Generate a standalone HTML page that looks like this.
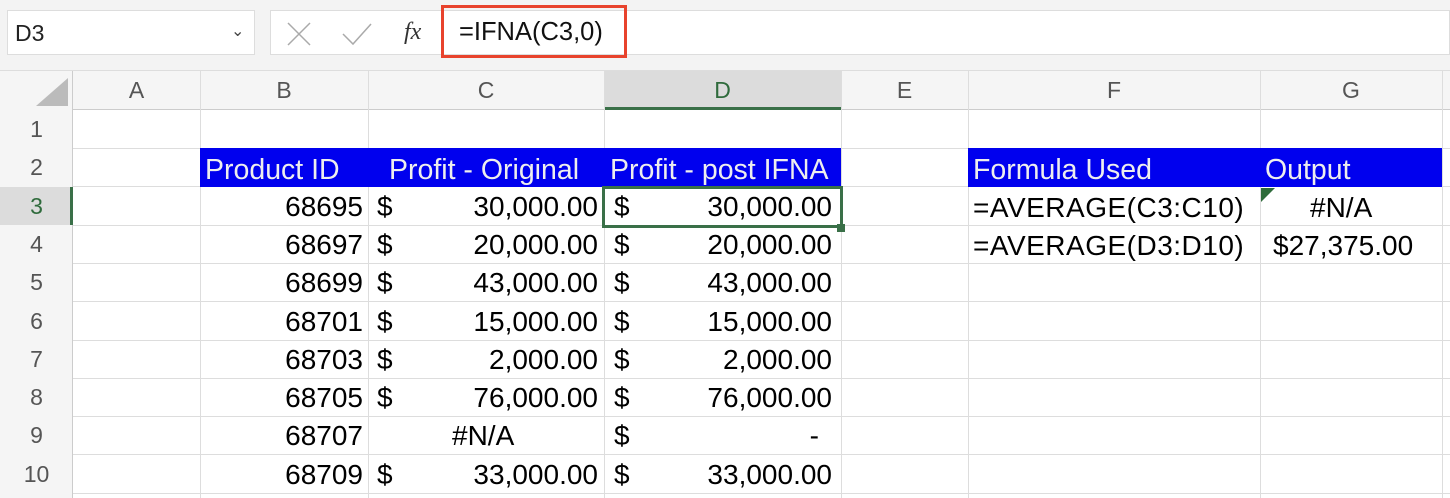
<!DOCTYPE html><html><head><style>
body{margin:0;width:1450px;height:498px;overflow:hidden;background:#fff;font-family:"Liberation Sans",Arial,sans-serif;position:relative}
.a{position:absolute;box-sizing:border-box}
.t{position:absolute;font-size:28px;line-height:38px;white-space:nowrap;color:#000}
.h{position:absolute;font-size:23px;color:#555;text-align:center;line-height:38px}
</style></head><body>
<div class="a" style="left:0;top:0;width:1450px;height:71px;background:#f3f3f3;border-bottom:1px solid #ddd"></div>
<div class="a" style="left:7px;top:10px;width:248px;height:45px;background:#fff;border:1px solid #ddd"></div>
<div class="t" style="left:15px;top:14px;font-size:23px;color:#222">D3</div>
<div class="t" style="left:231px;top:13px;font-size:16px;color:#444">⌄</div>
<div class="a" style="left:270px;top:10px;width:1180px;height:45px;background:#fff;border:1px solid #ddd"></div>
<svg class="a" style="left:285px;top:20px" width="110" height="26"><path d="M3 3L25 25M25 3L3 25" stroke="#aaa" stroke-width="1.5" fill="none"/><path d="M58 14L68 24L86 4" stroke="#aaa" stroke-width="1.5" fill="none"/></svg>
<div class="t" style="left:404px;top:13px;font-family:'Liberation Serif',serif;font-style:italic;font-size:24px;color:#333">fx</div>
<div class="a" style="left:441px;top:5px;width:186px;height:53px;border:3px solid #e8432d"></div>
<div class="t" style="left:459px;top:13px;font-size:25.5px;color:#111">=IFNA(C3,0)</div>
<div class="a" style="left:0;top:71px;width:1450px;height:39px;background:#f5f5f5;border-bottom:1px solid #ccc"></div>
<div class="a" style="left:0;top:71px;width:73px;height:427px;background:#f5f5f5;border-right:1px solid #ccc"></div>
<svg class="a" style="left:28px;top:76px" width="42" height="32"><path d="M40 2L40 30L8 30Z" fill="#bbb"/></svg>
<div class="a" style="left:604px;top:71px;width:237px;height:39px;background:#dcdcdc;border-bottom:3px solid #3a7048"></div>
<div class="a" style="left:0;top:187px;width:73px;height:38px;background:#dcdcdc;border-right:3px solid #3a7048"></div>
<div id="g"></div>
<div class="a" style="left:200px;top:148px;width:641px;height:39px;background:#0000ee"></div>
<div class="a" style="left:968px;top:148px;width:474px;height:39px;background:#0000ee"></div>
<div class="t" style="left:205px;top:151px;color:#eee;font-size:28.5px">Product ID</div>
<div class="t" style="left:389px;top:151px;color:#eee;font-size:28.5px">Profit - Original</div>
<div class="t" style="left:610px;top:151px;color:#eee;font-size:28.5px">Profit - post IFNA</div>
<div class="t" style="left:973px;top:151px;color:#eee;font-size:28.5px">Formula Used</div>
<div class="t" style="left:1265px;top:151px;color:#eee;font-size:28.5px">Output</div>
<div class="a" style="left:602px;top:186px;width:241px;height:42px;border:3px solid #3a7048"></div>
<div class="a" style="left:837px;top:224px;width:8px;height:8px;background:#3a7048"></div>
<svg class="a" style="left:1261px;top:188px" width="16" height="16"><path d="M0 0L14 0L0 14Z" fill="#2e6b3a"/></svg>
<div class="t" style="left:973px;top:189px;font-size:28px;letter-spacing:0.5px">=AVERAGE(C3:C10)</div>
<div class="t" style="left:1310px;top:189px">#N/A</div>
<div class="t" style="left:973px;top:227px;font-size:28px;letter-spacing:0.5px">=AVERAGE(D3:D10)</div>
<div class="t" style="left:1273px;top:227px">$27,375.00</div>
<script>
var g='',cols=[[73,200,'A'],[200,368,'B'],[368,604,'C'],[604,841,'D'],[841,968,'E'],[968,1260,'F'],[1260,1442,'G']];
cols.forEach(function(c){g+='<div class="h" style="left:'+c[0]+'px;top:71px;width:'+(c[1]-c[0])+'px;'+(c[2]=='D'?'color:#2f6b3c':'')+'">'+c[2]+'</div>';
g+='<div class="a" style="left:'+c[1]+'px;top:71px;width:1px;height:427px;background:#ddd"></div>';});
for(var r=1;r<=10;r++){var yy=110+(r-1)*38.3;
g+='<div class="h" style="left:0;top:'+yy+'px;width:73px;'+(r==3?'color:#2f6b3c':'')+'">'+r+'</div>';
g+='<div class="a" style="left:73px;top:'+(yy+38)+'px;width:1377px;height:1px;background:#ddd"></div>';}
var ids=[68695,68697,68699,68701,68703,68705,68707,68709],c=['30,000.00','20,000.00','43,000.00','15,000.00','2,000.00','76,000.00',null,'33,000.00'];
for(var i=0;i<8;i++){var yy=110+(i+2)*38.3+1;
g+='<div class="t" style="left:200px;width:163px;text-align:right;top:'+yy+'px">'+ids[i]+'</div>';
if(c[i]){g+='<div class="t" style="left:377px;top:'+yy+'px">$</div><div class="t" style="left:368px;width:230px;text-align:right;top:'+yy+'px">'+c[i]+'</div>';
g+='<div class="t" style="left:614px;top:'+yy+'px">$</div><div class="t" style="left:604px;width:228px;text-align:right;top:'+yy+'px">'+c[i]+'</div>';}
else{g+='<div class="t" style="left:452px;top:'+yy+'px">#N/A</div><div class="t" style="left:614px;top:'+yy+'px">$</div><div class="t" style="left:604px;width:215px;text-align:right;top:'+yy+'px">-</div>';}}
document.getElementById('g').innerHTML=g;
</script>
</body></html>
